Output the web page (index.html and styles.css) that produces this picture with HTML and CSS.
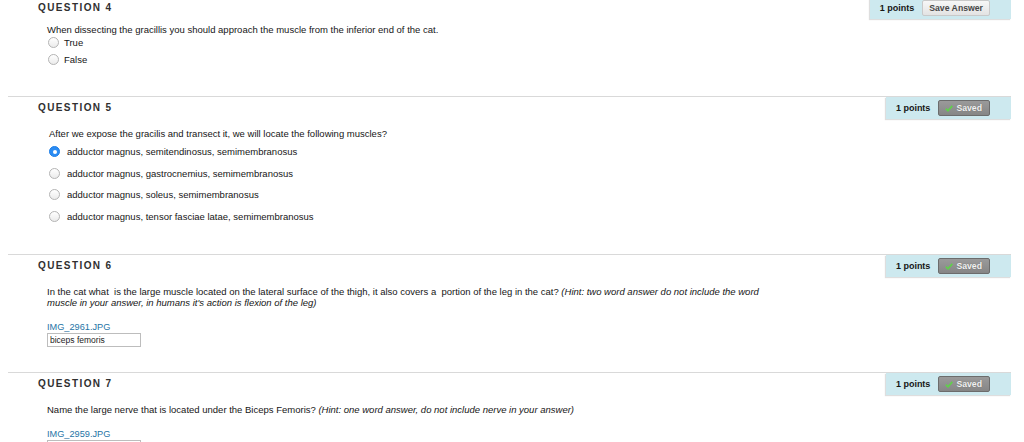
FILE: index.html
```html
<!DOCTYPE html>
<html lang="en">
<head>
<meta charset="utf-8">
<title>Test</title>
<link rel="stylesheet" href="styles.css">
</head>
<body>
<div class="page">
  <section class="question q-tf">
    <div class="qhead">
      <h3 class="qtitle">QUESTION 4</h3>
      <div class="points">
        <span class="pts">1 points</span>
        <button class="btn btn-save">Save Answer</button>
      </div>
    </div>
    <div class="qbody">
      <p class="qtext">When dissecting the gracillis you should approach the muscle from the inferior end of the cat.</p>
      <div class="opts">
        <label class="opt"><input type="radio" name="q4" class="radio"><span>True</span></label>
        <label class="opt"><input type="radio" name="q4" class="radio"><span>False</span></label>
      </div>
    </div>
  </section>

  <section class="question q-mc">
    <div class="qhead">
      <h3 class="qtitle">QUESTION 5</h3>
      <div class="points">
        <span class="pts">1 points</span>
        <button class="btn btn-saved"><svg class="check" width="8" height="7" viewBox="0 0 8 7"><path d="M0.8 3.6 L3 5.8 L7.3 0.9" fill="none" stroke="#5fd14a" stroke-width="1.6"/></svg>Saved</button>
      </div>
    </div>
    <div class="qbody">
      <p class="qtext">After we expose the gracilis and transect it, we will locate the following muscles?</p>
      <div class="opts">
        <label class="opt"><input type="radio" name="q5" class="radio" checked><span>adductor magnus, semitendinosus, semimembranosus</span></label>
        <label class="opt"><input type="radio" name="q5" class="radio"><span>adductor magnus, gastrocnemius, semimembranosus</span></label>
        <label class="opt"><input type="radio" name="q5" class="radio"><span>adductor magnus, soleus, semimembranosus</span></label>
        <label class="opt"><input type="radio" name="q5" class="radio"><span>adductor magnus, tensor fasciae latae, semimembranosus</span></label>
      </div>
    </div>
  </section>

  <section class="question q-fill">
    <div class="qhead">
      <h3 class="qtitle">QUESTION 6</h3>
      <div class="points">
        <span class="pts">1 points</span>
        <button class="btn btn-saved"><svg class="check" width="8" height="7" viewBox="0 0 8 7"><path d="M0.8 3.6 L3 5.8 L7.3 0.9" fill="none" stroke="#5fd14a" stroke-width="1.6"/></svg>Saved</button>
      </div>
    </div>
    <div class="qbody">
      <p class="qtext">In the cat what&nbsp; is the large muscle located on the lateral surface of the thigh, it also covers a&nbsp; portion of the leg in the cat? <em>(Hint: two word answer do not include the word<br>muscle in your answer, in humans it's action is flexion of the leg)</em></p>
      <a href="#" class="file">IMG_2961.JPG</a>
      <input type="text" class="answer" value="biceps femoris">
    </div>
  </section>

  <section class="question q-fill">
    <div class="qhead">
      <h3 class="qtitle">QUESTION 7</h3>
      <div class="points">
        <span class="pts">1 points</span>
        <button class="btn btn-saved"><svg class="check" width="8" height="7" viewBox="0 0 8 7"><path d="M0.8 3.6 L3 5.8 L7.3 0.9" fill="none" stroke="#5fd14a" stroke-width="1.6"/></svg>Saved</button>
      </div>
    </div>
    <div class="qbody">
      <p class="qtext">Name the large nerve that is located under the Biceps Femoris? <em>(Hint: one word answer, do not include nerve in your answer)</em></p>
      <a href="#" class="file">IMG_2959.JPG</a>
      <input type="text" class="answer" value="">
    </div>
  </section>
</div>
</body>
</html>
```

FILE: styles.css
```css
html, body {
  margin: 0;
  background: #ffffff;
}

body {
  font-family: "Liberation Sans", Arial, Helvetica, sans-serif;
  font-size: 9.5px;
  color: #161616;
}

.page {
  margin-top: -4px;
  padding: 0 13px 0 8px;
}

.question {
  border-top: 1px solid #d9d9d9;
}

.q-tf { padding-bottom: 28px; }
.q-mc { padding-bottom: 27px; }
.q-fill { padding-bottom: 25px; }

.qhead {
  display: flex;
  justify-content: space-between;
  align-items: flex-start;
}

.qtitle {
  margin: 5px 0 0 30px;
  font-size: 10px;
  line-height: 12px;
  font-weight: bold;
  letter-spacing: 1.4px;
  color: #303030;
}

.points {
  display: flex;
  align-items: center;
  gap: 8px;
  padding: 3px 21px 3px 10px;
  background: #cde9ef;
  box-shadow: -1px 1px 1px rgba(0, 0, 0, 0.13);
}

.pts {
  font-size: 9px;
  font-weight: bold;
  color: #161616;
}

.btn {
  box-sizing: border-box;
  height: 16px;
  margin: 0;
  font-family: "Liberation Sans", Arial, sans-serif;
  font-size: 8.7px;
  font-weight: bold;
  line-height: 14px;
  border-radius: 2px;
  cursor: pointer;
}

.btn-save {
  padding: 0 6px;
  color: #474747;
  background: linear-gradient(#f7f7f7, #e3e3e3);
  border: 1px solid #c9c9c9;
}

.btn-saved {
  display: flex;
  align-items: center;
  gap: 3px;
  padding: 0 7px 0 6px;
  color: #f2f2f2;
  background: linear-gradient(#9a9a9a, #868686);
  border: 1px solid #6c6c6c;
  text-shadow: 0 0 1px rgba(0, 0, 0, 0.3);
}

.check {
  display: block;
  flex: none;
}

.qbody {
  padding-left: 39px;
}

.q-mc .qbody {
  padding-left: 41px;
}

.qtext {
  margin: 9px 0 0;
  line-height: 11px;
}

.q-tf .qtext {
  margin-top: 5px;
}

.opts {
  margin-top: 2px;
}

.q-tf .opts {
  margin-top: -1px;
}

.opt {
  display: flex;
  align-items: center;
  gap: 7px;
  height: 21.5px;
}

.q-tf .opt {
  height: 17px;
  gap: 5px;
  padding-left: 1px;
}

.radio {
  appearance: none;
  -webkit-appearance: none;
  box-sizing: border-box;
  flex: none;
  width: 11px;
  height: 11px;
  margin: 0;
  border-radius: 50%;
  border: 1px solid #b4b4b4;
  background: linear-gradient(#ffffff, #ebebeb);
  display: grid;
  place-items: center;
}

.radio:checked {
  background: #2b8cf3;
  border-color: #1e7fe8;
}

.radio:checked::after {
  content: "";
  width: 4px;
  height: 4px;
  border-radius: 50%;
  background: #ffffff;
}

.file {
  display: block;
  margin-top: 13px;
  font-size: 9.2px;
  line-height: 12px;
  color: #2674a6;
  text-decoration: none;
}

.answer {
  display: block;
  box-sizing: border-box;
  width: 94px;
  height: 14px;
  margin: 0;
  padding: 0 2px;
  border: 1px solid #bdbdbd;
  font-family: "Liberation Sans", Arial, sans-serif;
  font-size: 8.5px;
  color: #222222;
  outline: none;
}
```
